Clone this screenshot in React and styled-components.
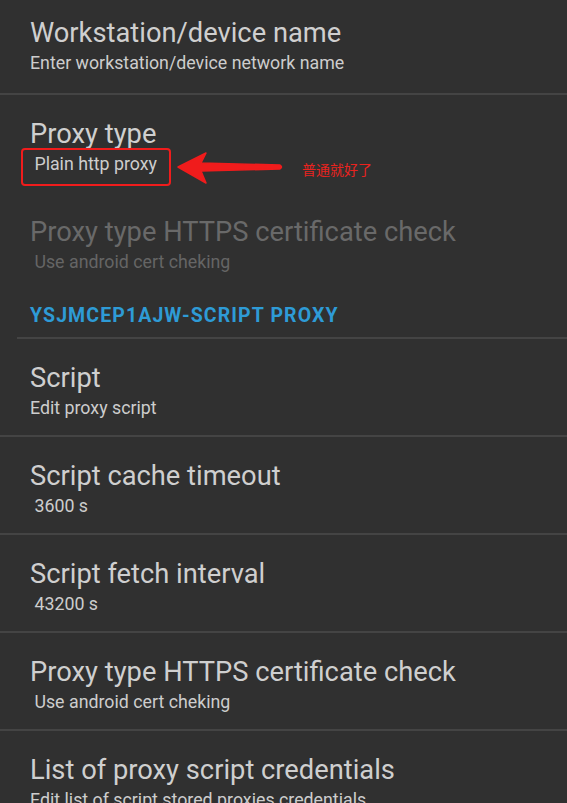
import React from "react";
import styled, { createGlobalStyle } from "styled-components";

const GlobalStyle = createGlobalStyle`
  html, body {
    margin: 0;
    padding: 0;
    background: #303030;
  }
  body {
    font-family: Roboto, "Noto Sans", sans-serif;
    overflow: hidden;
  }
`;

const Screen = styled.div`
  width: 567px;
  height: 803px;
  overflow: hidden;
  position: relative;
  background: #303030;
`;

const List = styled.div`
  display: flex;
  flex-direction: column;
  margin-top: -6px;
`;

const Item = styled.div`
  height: ${(p) => p.$h || 98}px;
  box-sizing: border-box;
  padding: 24px 30px 0;
  display: flex;
  flex-direction: column;
  border-bottom: ${(p) => (p.$divider ? "2px solid #444" : "none")};
`;

const Title = styled.div`
  font-size: 27.3px;
  line-height: 30px;
  color: ${(p) => (p.$disabled ? "#696969" : "#cfcfcf")};
  white-space: nowrap;
`;

const Summary = styled.div`
  font-size: 17.8px;
  line-height: 30px;
  color: ${(p) => (p.$disabled ? "#656565" : "#cdcdcd")};
  white-space: pre;
`;

const SectionHeader = styled.div`
  height: 46px;
  padding: 3px 30px 0;
  box-sizing: border-box;
  display: flex;
  align-items: center;
  font-size: 19.5px;
  font-weight: 700;
  color: #2e9bd6;
  letter-spacing: 1.1px;
`;

const SectionDivider = styled.div`
  height: 2px;
  margin-left: 17px;
  background: #444;
`;

const Note = styled.div`
  position: absolute;
  left: 302px;
  top: 159px;
  font-family: "Noto Sans CJK SC", sans-serif;
  font-size: 14px;
  color: #e8231f;
`;

const Callout = styled.div`
  position: absolute;
  left: 21px;
  top: 148px;
  width: 150px;
  height: 38px;
  box-sizing: border-box;
  border: 2px solid #f01c1c;
  border-radius: 4px;
`;

const Arrow = styled.svg`
  position: absolute;
  left: 176px;
  top: 150px;
`;

const items = [
  { title: "Proxy type", summary: " Plain http proxy" },
  { title: "Proxy type HTTPS certificate check", summary: " Use android cert cheking", disabled: true },
];

const scriptItems = [
  { title: "Script", summary: "Edit proxy script" },
  { title: "Script cache timeout", summary: " 3600 s" },
  { title: "Script fetch interval", summary: " 43200 s" },
  { title: "Proxy type HTTPS certificate check", summary: " Use android cert cheking" },
  { title: "List of proxy script credentials", summary: "Edit list of script stored proxies credentials" },
];

export default function App() {
  return (
    <Screen>
      <GlobalStyle />
      <List>
        <Item $divider $h={101}>
          <Title>Workstation/device name</Title>
          <Summary>Enter workstation/device network name</Summary>
        </Item>
        {items.map((it) => (
          <Item key={it.title} $h={98}>
            <Title $disabled={it.disabled}>{it.title}</Title>
            <Summary $disabled={it.disabled}>{it.summary}</Summary>
          </Item>
        ))}
        <SectionHeader>YSJMCEP1AJW-SCRIPT PROXY</SectionHeader>
        <SectionDivider />
        {scriptItems.map((it) => (
          <Item key={it.title + it.summary} $divider>
            <Title>{it.title}</Title>
            <Summary>{it.summary}</Summary>
          </Item>
        ))}
      </List>
      <Callout />
      <Arrow width="110" height="36" viewBox="0 0 110 36">
        <path
          d="M2 17 L30 3 L25 13 L104 15 Q107 17 104 19 L25 21 L30 33 Z"
          fill="#f01c1c"
          stroke="#f01c1c"
          strokeLinejoin="round"
          strokeWidth="1.5"
        />
      </Arrow>
      <Note>普通就好了</Note>
    </Screen>
  );
}
